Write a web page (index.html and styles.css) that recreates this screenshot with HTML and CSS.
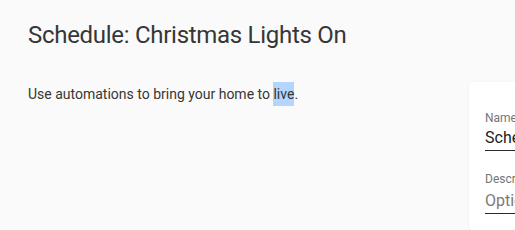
FILE: index.html
```html
<!DOCTYPE html>
<html lang="en">
<head>
    <meta charset="UTF-8">
    <meta name="viewport" content="width=device-width, initial-scale=1.0">
    <title>Automation editor</title>
    <link rel="stylesheet" href="styles.css">
</head>
<body>

    <div class="page">
        <div class="header">Schedule: Christmas Lights On</div>

        <div class="section">
            <div class="intro">
                Use automations to bring your home to <span class="picked">live</span>.
            </div>

            <div class="card">
                <div class="field">
                    <label for="autoName">Name</label>
                    <input type="text" id="autoName" value="Schedule: Christmas Lights On">
                </div>
                <div class="field">
                    <label for="autoDesc">Description</label>
                    <input type="text" id="autoDesc" class="empty" placeholder="Optional description">
                </div>
            </div>
        </div>
    </div>

</body>
</html>
```

FILE: styles.css
```css
body {
    font-family: Roboto, "Noto Sans", sans-serif;
    margin: 0;
    background-color: #fafafa;
    color: #212121;
    overflow: hidden;
}

.page {
    padding: 19px 0 0 28px;
    overflow: hidden;
}

/* 페이지 제목 */
.header {
    font-size: 24px;
    line-height: 32px;
    letter-spacing: -0.012em;
    color: #363636;
    white-space: nowrap;
}

.section {
    display: flex;
    align-items: flex-start;
    gap: 24px;
    margin-top: 31px;
}

.intro {
    flex: 0 0 417px;
    font-size: 14px;
    line-height: 24px;
    color: #363636;
}

/* 선택된 글자 */
.picked {
    display: inline-block;
    background: #b4d5fe;
    line-height: 24px;
}

.card {
    flex: 0 0 420px;
    background: white;
    border-radius: 4px;
    box-shadow: 0 1px 3px rgba(0, 0, 0, 0.06), 0 0 1px rgba(0, 0, 0, 0.06);
    padding: 29px 16px 16px;
}

.field {
    display: flex;
    flex-direction: column;
}

.field + .field {
    margin-top: 21px;
}

.field label {
    font-size: 12px;
    line-height: 14px;
    color: #757575;
}

.field input {
    font-family: Roboto, "Noto Sans", sans-serif;
    font-size: 16px;
    line-height: 24px;
    height: 25px;
    padding: 0;
    border: none;
    border-bottom: 1px solid #2b2b2b;
    outline: none;
    background: transparent;
    color: #212121;
}

/* 빈 입력칸은 글자가 조금 아래에 있음 */
.field input.empty {
    padding-top: 2px;
}

.field input::placeholder {
    color: #7a7a7a;
}
```
